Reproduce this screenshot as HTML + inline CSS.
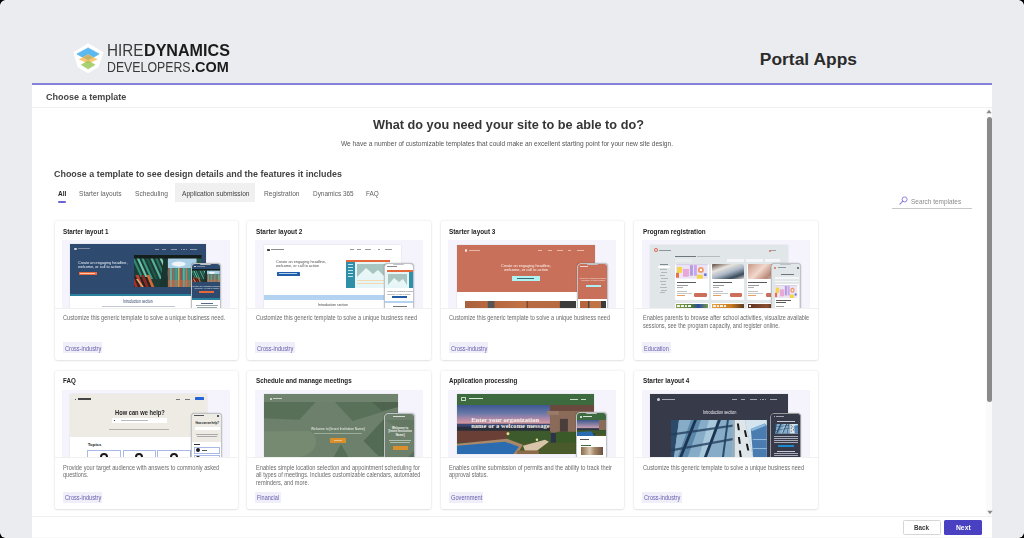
<!DOCTYPE html>
<html><head><meta charset="utf-8"><title>Choose a template</title>
<style>
html,body{margin:0;padding:0;width:1024px;height:538px;overflow:hidden;background:#000;}
#ring{position:absolute;left:0;top:0;width:1024px;height:538px;background:#fff;border-radius:6px;}
*{box-sizing:border-box;}
#root{position:absolute;left:0;top:0;width:1024px;height:538px;background:#ebecf0;border-radius:8px;overflow:hidden;font-family:"Liberation Sans",sans-serif;}
.a{position:absolute;white-space:nowrap;line-height:1;}
.b{position:absolute;}
.card{background:#fff;border-radius:2px;box-shadow:0 0 2.5px rgba(0,0,0,.13),0 1px 2px rgba(0,0,0,.07);}
</style></head><body><div id="ring"></div><div id="root">
<svg class="b" style="left:70px;top:40px" width="38" height="36" viewBox="0 0 38 36">
<polygon points="18.1,4.2 32.6,12.6 27.8,26.6 18.1,32.3 8.4,26.6 4.2,12.6" fill="#ffffff" stroke="#ffffff" stroke-width="1.6" stroke-linejoin="round"/>
<polygon points="18.1,7.9 29.1,14 18.1,20.2 6.9,14" fill="#5cb9ef" stroke="#5cb9ef" stroke-width="0.8" stroke-linejoin="round"/>
<polygon points="18.1,14.6 27.1,19.4 18.1,23.1 9.3,19.4" fill="#fdc873" stroke="#fdc873" stroke-width="0.6" stroke-linejoin="round"/>
<polygon points="18.1,14.6 23.4,17.4 18.1,20.2 12.8,17.4" fill="#c8b46c"/>
<polygon points="18.1,20.7 25.1,24.8 18.1,29.1 11.3,24.8" fill="#a9d173" stroke="#a9d173" stroke-width="0.6" stroke-linejoin="round"/>
<polygon points="18.1,20.9 21.5,22.4 18.1,23.1 14.7,22.4" fill="#b3c052"/>
</svg>
<div class="a" style="left:107.30px;top:42.63px;font-size:15.8px;font-weight:400;color:#3a3a3a;transform-origin:0 0;transform:scaleX(0.9648);">HIRE</div>
<div class="a" style="left:143.70px;top:42.63px;font-size:15.8px;font-weight:700;color:#1b1b1b;transform-origin:0 0;transform:scaleX(1.0193);">DYNAMICS</div>
<div class="a" style="left:107.20px;top:58.73px;font-size:15.2px;font-weight:400;color:#3a3a3a;transform-origin:0 0;transform:scaleX(0.8116);">DEVELOPERS</div>
<div class="a" style="left:191.40px;top:58.73px;font-size:15.2px;font-weight:700;color:#1b1b1b;transform-origin:0 0;transform:scaleX(0.9521);">.COM</div>
<div class="a" style="left:759.80px;top:50.97px;font-size:17.4px;font-weight:700;color:#2b2b2b;letter-spacing:0.024px;">Portal Apps</div>
<div class="b" style="left:32.00px;top:83.00px;width:960.00px;height:455.00px;background:#fff;"></div>
<div class="b" style="left:32.00px;top:83.00px;width:960.00px;height:2.00px;background:#8383d9;"></div>
<div class="a" style="left:46.00px;top:91.87px;font-size:9.6px;font-weight:700;color:#464646;transform-origin:0 0;transform:scaleX(0.9415);">Choose a template</div>
<div class="b" style="left:32.00px;top:107.00px;width:960.00px;height:1.00px;background:#f0f0f0;"></div>
<div class="b" style="left:985.50px;top:108.00px;width:6.50px;height:408.00px;background:#fafafa;"></div>
<svg class="b" style="left:986px;top:109px" width="6" height="5" viewBox="0 0 6 5"><polygon points="3,0.8 5.6,4.2 0.4,4.2" fill="#8a8a8a"/></svg>
<div class="b" style="left:987.20px;top:117.00px;width:4.60px;height:285.00px;background:#8a8a8a;border-radius:3px;"></div>
<svg class="b" style="left:986.5px;top:510px" width="6" height="5" viewBox="0 0 6 5"><polygon points="0.4,0.8 5.6,0.8 3,4.2" fill="#8a8a8a"/></svg>
<div class="a" style="left:373.20px;top:118.53px;font-size:12.6px;font-weight:700;color:#363636;transform-origin:0 0;transform:scaleX(1.0083);">What do you need your site to be able to do?</div>
<div class="a" style="left:341.20px;top:139.82px;font-size:7.3px;font-weight:400;color:#555;transform-origin:0 0;transform:scaleX(0.9039);">We have a number of customizable templates that could make an excellent starting point for your new site design.</div>
<div class="a" style="left:53.60px;top:168.77px;font-size:9.6px;font-weight:700;color:#424242;transform-origin:0 0;transform:scaleX(0.9311);">Choose a template to see design details and the features it includes</div>
<div class="b" style="left:175.30px;top:182.60px;width:79.60px;height:19.90px;background:#f0f0f0;"></div>
<div class="a" style="left:57.50px;top:189.82px;font-size:7.3px;font-weight:700;color:#242424;transform-origin:0 0;transform:scaleX(0.8920);">All</div>
<div class="a" style="left:78.90px;top:189.82px;font-size:7.3px;font-weight:400;color:#616161;transform-origin:0 0;transform:scaleX(0.9018);">Starter layouts</div>
<div class="a" style="left:134.50px;top:189.82px;font-size:7.3px;font-weight:400;color:#616161;transform-origin:0 0;transform:scaleX(0.9120);">Scheduling</div>
<div class="a" style="left:181.80px;top:189.82px;font-size:7.3px;font-weight:400;color:#424242;transform-origin:0 0;transform:scaleX(0.9097);">Application submission</div>
<div class="a" style="left:263.90px;top:189.82px;font-size:7.3px;font-weight:400;color:#616161;transform-origin:0 0;transform:scaleX(0.9126);">Registration</div>
<div class="a" style="left:312.90px;top:189.82px;font-size:7.3px;font-weight:400;color:#616161;transform-origin:0 0;transform:scaleX(0.8784);">Dynamics 365</div>
<div class="a" style="left:366.10px;top:189.82px;font-size:7.3px;font-weight:400;color:#616161;transform-origin:0 0;transform:scaleX(0.8770);">FAQ</div>
<div class="b" style="left:57.50px;top:201.40px;width:8.20px;height:1.60px;background:#6b62d6;border-radius:1px;"></div>
<svg class="b" style="left:899px;top:196px" width="9" height="9" viewBox="0 0 9 9"><circle cx="5.6" cy="3.4" r="2.5" fill="none" stroke="#8b7fe0" stroke-width="1"/><line x1="3.8" y1="5.2" x2="0.9" y2="8.1" stroke="#8b7fe0" stroke-width="1.1" stroke-linecap="round"/></svg>
<div class="a" style="left:911.00px;top:197.87px;font-size:7.0px;font-weight:400;color:#8a8a8a;transform-origin:0 0;transform:scaleX(0.9198);">Search templates</div>
<div class="b" style="left:891.80px;top:207.60px;width:80.40px;height:1.00px;background:#c8c8c8;"></div>
<div class="b" style="left:32.00px;top:516.00px;width:960.00px;height:1.20px;background:#f0f0f0;"></div>
<div class="b" style="left:903.20px;top:520.40px;width:37.60px;height:15.10px;background:#fff;border:1px solid #d6d6d6;border-radius:1.5px;"></div>
<div class="a" style="left:914.40px;top:524.14px;font-size:7.4px;font-weight:700;color:#3a3a3a;transform-origin:0 0;transform:scaleX(0.8548);">Back</div>
<div class="b" style="left:944.40px;top:520.40px;width:37.30px;height:15.10px;background:#4a41c2;border-radius:1.5px;"></div>
<div class="a" style="left:956.20px;top:524.14px;font-size:7.4px;font-weight:700;color:#ffffff;transform-origin:0 0;transform:scaleX(0.9133);">Next</div>
<div class="b" style="left:32.00px;top:537.00px;width:960.00px;height:1.00px;background:#f8f9f8;"></div>
<div class="b card" style="left:54.5px;top:221.4px;width:183.7px;height:138.5px"><div class="a" style="left:8.30px;top:6.44px;font-size:8.1px;font-weight:700;color:#242424;transform-origin:0 0;transform:scaleX(0.7720);">Starter layout 1</div><div class="b" style="left:7.6px;top:18.9px;width:168px;height:67.7px;background:#f5f4fd;overflow:hidden"><div class="b" style="left:7.9px;top:4px;width:136.2px;height:70px;overflow:hidden;box-shadow:0 0 1px rgba(0,0,0,.2)"><div class="b" style="left:0.00px;top:0.00px;width:136.20px;height:49.40px;background:#2e4a6f;"></div><div class="b" style="left:0.00px;top:49.40px;width:136.20px;height:2.30px;background:#2a819e;"></div><div class="b" style="left:0.00px;top:51.70px;width:136.20px;height:20.00px;background:#fff;"></div><div class="b" style="left:3.9px;top:3.4px;width:2.8px;height:2.8px;border-radius:50%;background:#cfd6e2"></div><div class="b" style="left:8.00px;top:4.00px;width:12.00px;height:1.10px;background:#7d8aa2;"></div><div class="b" style="left:85.50px;top:4.30px;width:4.00px;height:0.90px;background:#8d9ab0;"></div><div class="b" style="left:92.50px;top:4.30px;width:4.00px;height:0.90px;background:#8d9ab0;"></div><div class="b" style="left:101.00px;top:4.30px;width:6.00px;height:0.90px;background:#8d9ab0;"></div><div class="b" style="left:111.00px;top:4.30px;width:0.60px;height:0.90px;background:#8d9ab0;"></div><div class="b" style="left:113.00px;top:4.30px;width:2.00px;height:0.90px;background:#8d9ab0;"></div><div class="b" style="left:116.00px;top:4.30px;width:0.60px;height:0.90px;background:#8d9ab0;"></div><div class="b" style="left:120.50px;top:4.30px;width:7.00px;height:0.90px;background:#8d9ab0;"></div><div class="a" style="left:8.30px;top:16.86px;font-size:4.3px;font-weight:400;color:#f0f3f8;transform-origin:0 0;transform:scaleX(0.8778);">Create an engaging headline,</div><div class="a" style="left:8.30px;top:20.56px;font-size:4.3px;font-weight:400;color:#f0f3f8;transform-origin:0 0;transform:scaleX(0.8913);">welcome, or call to action</div><div class="b" style="left:8.70px;top:27.70px;width:18.80px;height:3.20px;background:#e8683a;"></div><div class="b" style="left:10.50px;top:29.00px;width:15.00px;height:0.60px;background:#f8c8b0;"></div><div class="b" style="left:64.5px;top:10.8px;width:67.5px;height:32.1px;overflow:hidden"><svg class="b" style="left:0;top:0;filter:blur(0.3px)" width="67.5" height="32.1" viewBox="0 0 68 32" preserveAspectRatio="none"><rect width="68" height="32" fill="#1e3c36"/><polygon points="-2.0,3 0.4,3 10.0,24 7.6,24" fill="#2f8a74"/><polygon points="2.6,3 5.0,3 14.6,24 12.2,24" fill="#6cc4a8"/><polygon points="7.2,3 9.6,3 19.2,24 16.8,24" fill="#3c9c84"/><polygon points="11.8,3 14.2,3 23.8,24 21.4,24" fill="#1e5a4c"/><polygon points="16.4,3 18.8,3 28.4,24 26.0,24" fill="#58b096"/><polygon points="21.0,3 23.4,3 33.0,24 30.6,24" fill="#2a7864"/><polygon points="25.6,3 28.0,3 37.6,24 35.2,24" fill="#7fd0b6"/><polygon points="30.2,3 32.6,3 42.2,24 39.8,24" fill="#357f6c"/><polygon points="0,22 14,22 20,32 0,32" fill="#2a2220"/><polygon points="-4.0,20 -1.0,20 4.0,32 1.0,32" fill="#a8302a"/><polygon points="1.5,20 4.5,20 9.5,32 6.5,32" fill="#c24032"/><polygon points="7.0,20 10.0,20 15.0,32 12.0,32" fill="#8a2a26"/><polygon points="12.5,20 15.5,20 20.5,32 17.5,32" fill="#d06a3a"/><polygon points="2,24 4,24 10,32 8,32" fill="#d8a870"/><rect x="34" y="3" width="30" height="10" fill="#a8cfe6"/><ellipse cx="45" cy="9" rx="7" ry="2.6" fill="#eef4f8"/><rect x="34" y="13" width="34" height="19" fill="#3a8a80"/><rect x="34.0" y="13" width="1.3" height="19" fill="#c84a3c"/><rect x="36.6" y="13" width="1.3" height="19" fill="#7cc0b0"/><rect x="39.2" y="13" width="1.3" height="19" fill="#d0503e"/><rect x="41.8" y="13" width="1.3" height="19" fill="#4aa090"/><rect x="44.4" y="13" width="1.3" height="19" fill="#e8a84a"/><rect x="47.0" y="13" width="1.3" height="19" fill="#c83a3a"/><rect x="49.6" y="13" width="1.3" height="19" fill="#6ab8a8"/><rect x="52.2" y="13" width="1.3" height="19" fill="#e06a40"/><rect x="54.8" y="13" width="1.3" height="19" fill="#3a8a80"/><rect x="57.4" y="13" width="1.3" height="19" fill="#d04a3a"/><rect x="60.0" y="13" width="1.3" height="19" fill="#8ac8b8"/><rect x="62.6" y="13" width="1.3" height="19" fill="#e8b050"/><rect x="65.2" y="13" width="1.3" height="19" fill="#c84040"/><rect x="34" y="25" width="34" height="7" fill="#d86a40" opacity=".45"/><rect x="63" y="3" width="5" height="12" fill="#2a5a50"/><polygon points="30,3 34,3 34,32 26,32" fill="#1a3430"/><rect width="68" height="3.5" fill="#141e1c"/></svg></div><div class="a" style="left:53.50px;top:56.19px;font-size:4.5px;font-weight:400;color:#34486e;transform-origin:0 0;transform:scaleX(0.7628);">Introduction section</div><div class="b" style="left:32.00px;top:62.00px;width:73.00px;height:0.60px;background:#c4c8d2;"></div></div><div class="b" style="left:128.60px;top:23.20px;width:30.5px;height:60px;border:1.5px solid #c0c0c0;border-radius:4px;background:#fff;overflow:hidden;box-shadow:0 0 1.2px rgba(0,0,0,.4)"><div class="b" style="left:0.00px;top:0.00px;width:30.00px;height:4.50px;background:#2e4a6f;"></div><div class="b" style="left:2.50px;top:1.50px;width:2.00px;height:1.20px;background:#c8d0dc;"></div><div class="b" style="left:5.50px;top:1.80px;width:8.00px;height:0.70px;background:#7d8aa2;"></div><div class="b" style="left:0;top:4.5px;width:30px;height:13.5px;overflow:hidden"><svg class="b" style="left:0;top:0;filter:blur(0.3px)" width="30" height="13.5" viewBox="0 0 68 32" preserveAspectRatio="none"><rect width="68" height="32" fill="#1e3c36"/><polygon points="-2.0,3 0.4,3 10.0,24 7.6,24" fill="#2f8a74"/><polygon points="2.6,3 5.0,3 14.6,24 12.2,24" fill="#6cc4a8"/><polygon points="7.2,3 9.6,3 19.2,24 16.8,24" fill="#3c9c84"/><polygon points="11.8,3 14.2,3 23.8,24 21.4,24" fill="#1e5a4c"/><polygon points="16.4,3 18.8,3 28.4,24 26.0,24" fill="#58b096"/><polygon points="21.0,3 23.4,3 33.0,24 30.6,24" fill="#2a7864"/><polygon points="25.6,3 28.0,3 37.6,24 35.2,24" fill="#7fd0b6"/><polygon points="30.2,3 32.6,3 42.2,24 39.8,24" fill="#357f6c"/><polygon points="0,22 14,22 20,32 0,32" fill="#2a2220"/><polygon points="-4.0,20 -1.0,20 4.0,32 1.0,32" fill="#a8302a"/><polygon points="1.5,20 4.5,20 9.5,32 6.5,32" fill="#c24032"/><polygon points="7.0,20 10.0,20 15.0,32 12.0,32" fill="#8a2a26"/><polygon points="12.5,20 15.5,20 20.5,32 17.5,32" fill="#d06a3a"/><polygon points="2,24 4,24 10,32 8,32" fill="#d8a870"/><rect x="34" y="3" width="30" height="10" fill="#a8cfe6"/><ellipse cx="45" cy="9" rx="7" ry="2.6" fill="#eef4f8"/><rect x="34" y="13" width="34" height="19" fill="#3a8a80"/><rect x="34.0" y="13" width="1.3" height="19" fill="#c84a3c"/><rect x="36.6" y="13" width="1.3" height="19" fill="#7cc0b0"/><rect x="39.2" y="13" width="1.3" height="19" fill="#d0503e"/><rect x="41.8" y="13" width="1.3" height="19" fill="#4aa090"/><rect x="44.4" y="13" width="1.3" height="19" fill="#e8a84a"/><rect x="47.0" y="13" width="1.3" height="19" fill="#c83a3a"/><rect x="49.6" y="13" width="1.3" height="19" fill="#6ab8a8"/><rect x="52.2" y="13" width="1.3" height="19" fill="#e06a40"/><rect x="54.8" y="13" width="1.3" height="19" fill="#3a8a80"/><rect x="57.4" y="13" width="1.3" height="19" fill="#d04a3a"/><rect x="60.0" y="13" width="1.3" height="19" fill="#8ac8b8"/><rect x="62.6" y="13" width="1.3" height="19" fill="#e8b050"/><rect x="65.2" y="13" width="1.3" height="19" fill="#c84040"/><rect x="34" y="25" width="34" height="7" fill="#d86a40" opacity=".45"/><rect x="63" y="3" width="5" height="12" fill="#2a5a50"/><polygon points="30,3 34,3 34,32 26,32" fill="#1a3430"/><rect width="68" height="3.5" fill="#141e1c"/></svg></div><div class="b" style="left:0.00px;top:18.00px;width:30.00px;height:16.00px;background:#2e4a6f;"></div><div class="a" style="left:15.00px;top:20.30px;font-size:2.2px;font-weight:400;color:#e8eef6;line-height:2.6px;text-align:center;transform:translateX(-50%);">Create an engaging headline,<br>welcome, or call to action</div><div class="b" style="left:7.50px;top:26.20px;width:15.00px;height:2.60px;background:#e5683c;"></div><div class="b" style="left:0.00px;top:34.00px;width:30.00px;height:2.00px;background:#2a819e;"></div><div class="b" style="left:0.00px;top:36.00px;width:30.00px;height:30.00px;background:#fff;"></div><div class="b" style="left:9.00px;top:38.50px;width:12.00px;height:0.80px;background:#5a6a8a;"></div><div class="b" style="left:4.00px;top:41.00px;width:22.00px;height:0.60px;background:#9aa;"></div><div class="b" style="left:5.00px;top:43.00px;width:20.00px;height:0.60px;background:#9aa;"></div></div><div class="b" style="left:138.10px;top:23.40px;width:11px;height:1.6px;background:#c0c0c0;border-radius:0 0 1px 1px"></div></div><div class="b" style="left:0.00px;top:86.60px;width:184.00px;height:0.90px;background:#f0f0f0;"></div><div class="a" style="left:8.30px;top:94.08px;font-size:6.4px;font-weight:400;color:#6a6a6a;transform-origin:0 0;transform:scaleX(0.8727);">Customize this generic template to solve a unique business need.</div><div class="b" style="left:8.1px;top:121.1px;height:10.9px;width:39.8px;background:#f0eef9;"></div><div class="a" style="left:10.10px;top:124.48px;font-size:6.4px;font-weight:400;color:#6660ae;transform-origin:0 0;transform:scaleX(0.8798);">Cross-industry</div></div><div class="b card" style="left:247.3px;top:221.4px;width:183.7px;height:138.5px"><div class="a" style="left:8.30px;top:6.44px;font-size:8.1px;font-weight:700;color:#242424;transform-origin:0 0;transform:scaleX(0.7874);">Starter layout 2</div><div class="b" style="left:7.6px;top:18.9px;width:168px;height:67.7px;background:#f5f4fd;overflow:hidden"><div class="b" style="left:9.2px;top:4.7px;width:137.1px;height:70px;overflow:hidden;box-shadow:0 0 1px rgba(0,0,0,.2)"><div class="b" style="left:0.00px;top:0.00px;width:137.10px;height:70.00px;background:#fff;"></div><div class="b" style="left:3.2px;top:3.6px;width:2.4px;height:2.6px;border:0.7px solid #444;border-radius:0.5px"></div><div class="b" style="left:7.00px;top:4.20px;width:13.00px;height:1.20px;background:#8a8a8a;"></div><div class="b" style="left:86.00px;top:4.40px;width:4.00px;height:1.00px;background:#9a9a9a;"></div><div class="b" style="left:93.00px;top:4.40px;width:4.00px;height:1.00px;background:#9a9a9a;"></div><div class="b" style="left:101.00px;top:4.40px;width:6.00px;height:1.00px;background:#9a9a9a;"></div><div class="b" style="left:114.00px;top:4.40px;width:2.00px;height:1.00px;background:#9a9a9a;"></div><div class="b" style="left:121.00px;top:4.40px;width:7.00px;height:1.00px;background:#9a9a9a;"></div><div class="a" style="left:12.40px;top:14.78px;font-size:4.4px;font-weight:400;color:#505050;transform-origin:0 0;transform:scaleX(0.8660);">Create an engaging headline,</div><div class="a" style="left:12.40px;top:19.18px;font-size:4.4px;font-weight:400;color:#505050;transform-origin:0 0;transform:scaleX(0.8745);">welcome, or call to action</div><div class="b" style="left:12.50px;top:26.80px;width:23.40px;height:3.80px;background:#1f5ea8;border-radius:0.5px;"></div><div class="b" style="left:15.00px;top:28.40px;width:18.00px;height:0.60px;background:#b8d0ec;"></div><div class="b" style="left:82.00px;top:14.60px;width:43.50px;height:28.20px;background:#e6f6f8;"></div><div class="b" style="left:82.00px;top:14.60px;width:43.50px;height:2.40px;background:#e4683c;"></div><div class="b" style="left:82.00px;top:17.00px;width:8.50px;height:25.80px;background:#2f8ea8;"></div><div class="b" style="left:83.50px;top:19.50px;width:5.50px;height:0.90px;background:#bfe6ee;"></div><div class="b" style="left:83.50px;top:22.30px;width:5.50px;height:0.90px;background:#bfe6ee;"></div><div class="b" style="left:83.50px;top:25.10px;width:5.50px;height:0.90px;background:#bfe6ee;"></div><div class="b" style="left:83.50px;top:27.90px;width:5.50px;height:0.90px;background:#bfe6ee;"></div><div class="b" style="left:83.50px;top:30.70px;width:5.50px;height:0.90px;background:#bfe6ee;"></div><div class="b" style="left:93.00px;top:19.50px;width:28.00px;height:13.00px;background:#a9c5c1;"></div><svg class="b" style="left:93px;top:19.5px" width="28" height="13" viewBox="0 0 28 13"><polygon points="0,13 9,4 16,10 21,6 28,13" fill="#e9f6f8"/></svg><div class="b" style="left:93.00px;top:35.00px;width:28.00px;height:0.80px;background:#f2d9b0;"></div><div class="b" style="left:93.00px;top:38.00px;width:28.00px;height:0.80px;background:#f2d9b0;"></div><div class="b" style="left:0.00px;top:49.80px;width:137.10px;height:5.00px;background:#b3d3f1;"></div><div class="a" style="left:54.00px;top:58.43px;font-size:4.1px;font-weight:400;color:#444;transform-origin:0 0;transform:scaleX(0.8412);">Introduction section</div></div><div class="b" style="left:128.80px;top:22.90px;width:30.5px;height:60px;border:1.5px solid #bfc2c6;border-radius:4px;background:#fff;overflow:hidden;box-shadow:0 0 1.2px rgba(0,0,0,.4)"><div class="b" style="left:2.00px;top:2.00px;width:10.00px;height:1.00px;background:#888;"></div><div class="b" style="left:2.00px;top:6.00px;width:26.00px;height:1.80px;background:#e4683c;"></div><div class="b" style="left:0.00px;top:7.80px;width:30.00px;height:16.00px;background:#e6f6f8;"></div><div class="b" style="left:24.00px;top:7.80px;width:6.00px;height:16.00px;background:#2f8ea8;"></div><div class="b" style="left:3.00px;top:9.50px;width:19.00px;height:11.00px;background:#a9c5c1;"></div><svg class="b" style="left:3px;top:9.5px" width="19" height="11" viewBox="0 0 19 11"><polygon points="0,11 6,4 11,8 15,5 19,11" fill="#e9f6f8"/></svg><div class="a" style="left:2.50px;top:26.00px;font-size:2.1px;font-weight:400;color:#444;line-height:2.6px;">Create an engaging headline,<br>welcome, or call to action</div><div class="b" style="left:7.00px;top:31.50px;width:15.00px;height:2.60px;background:#1f5aa3;"></div><div class="b" style="left:0.00px;top:37.00px;width:30.00px;height:2.20px;background:#b3d3f1;"></div><div class="b" style="left:8.00px;top:42.00px;width:14.00px;height:0.80px;background:#777;"></div></div><div class="b" style="left:138.30px;top:23.10px;width:11px;height:1.6px;background:#bfc2c6;border-radius:0 0 1px 1px"></div></div><div class="b" style="left:0.00px;top:86.60px;width:184.00px;height:0.90px;background:#f0f0f0;"></div><div class="a" style="left:8.30px;top:94.08px;font-size:6.4px;font-weight:400;color:#6a6a6a;transform-origin:0 0;transform:scaleX(0.8752);">Customize this generic template to solve a unique business need</div><div class="b" style="left:8.1px;top:121.1px;height:10.9px;width:39.8px;background:#f0eef9;"></div><div class="a" style="left:10.10px;top:124.48px;font-size:6.4px;font-weight:400;color:#6660ae;transform-origin:0 0;transform:scaleX(0.8798);">Cross-industry</div></div><div class="b card" style="left:440.5px;top:221.4px;width:183.7px;height:138.5px"><div class="a" style="left:8.30px;top:6.44px;font-size:8.1px;font-weight:700;color:#242424;transform-origin:0 0;transform:scaleX(0.7874);">Starter layout 3</div><div class="b" style="left:7.6px;top:18.9px;width:168px;height:67.7px;background:#f5f4fd;overflow:hidden"><div class="b" style="left:9px;top:4.7px;width:137.9px;height:70px;overflow:hidden;box-shadow:0 0 1px rgba(0,0,0,.2)"><div class="b" style="left:0.00px;top:0.00px;width:137.90px;height:47.50px;background:#c8705a;"></div><div class="b" style="left:0.00px;top:47.50px;width:137.90px;height:25.00px;background:#fff;"></div><div class="b" style="left:7.8px;top:4px;width:2.6px;height:2.6px;border-radius:50%;background:#f3e0da"></div><div class="b" style="left:11.50px;top:4.60px;width:11.00px;height:1.20px;background:#e9b8aa;"></div><div class="b" style="left:81.00px;top:4.60px;width:4.00px;height:1.00px;background:#e9b8aa;"></div><div class="b" style="left:91.00px;top:4.60px;width:4.00px;height:1.00px;background:#e9b8aa;"></div><div class="b" style="left:100.00px;top:4.60px;width:6.00px;height:1.00px;background:#e9b8aa;"></div><div class="b" style="left:111.00px;top:4.60px;width:3.00px;height:1.00px;background:#e9b8aa;"></div><div class="b" style="left:120.00px;top:4.60px;width:7.00px;height:1.00px;background:#e9b8aa;"></div><div class="a" style="left:43.80px;top:19.18px;font-size:4.4px;font-weight:400;color:#fdf2ee;transform-origin:0 0;transform:scaleX(0.8660);">Create an engaging headline,</div><div class="a" style="left:47.40px;top:23.48px;font-size:4.4px;font-weight:400;color:#fdf2ee;transform-origin:0 0;transform:scaleX(0.8928);">welcome, or call to action</div><div class="b" style="left:54.80px;top:31.10px;width:28.10px;height:4.70px;background:#aef2f4;"></div><div class="b" style="left:60.00px;top:33.20px;width:17.00px;height:0.70px;background:#3a6a6a;"></div><div class="b" style="left:23.50px;top:34.50px;width:10.00px;height:0.90px;background:#6ab8c0;opacity:0"></div><div class="b" style="left:8.00px;top:56.10px;width:111.00px;height:20.00px;background:linear-gradient(90deg,#a7603e 0%,#b8693f 20%,#555 21%,#555 26%,#b5663e 27%,#c27346 55%,#6a3a2a 56%,#b86a42 57%,#b86a42 85%,#3c3c3c 86%,#3c3c3c 100%);"></div></div><div class="b" style="left:129.10px;top:22.60px;width:30.5px;height:60px;border:1.5px solid #bfc2c6;border-radius:4px;background:#fff;overflow:hidden;box-shadow:0 0 1.2px rgba(0,0,0,.4)"><div class="b" style="left:0.00px;top:0.00px;width:30.00px;height:35.00px;background:#c8705a;"></div><div class="b" style="left:2.00px;top:2.00px;width:8.00px;height:1.00px;background:#f0d0c8;"></div><div class="a" style="left:15.00px;top:13.00px;font-size:2.1px;font-weight:400;color:#fbeee9;line-height:2.5px;text-align:center;transform:translateX(-50%);">Create an engaging headline,<br>welcome, or call to action</div><div class="b" style="left:7.50px;top:21.00px;width:15.00px;height:2.40px;background:#aef0f2;"></div><div class="b" style="left:2.00px;top:37.00px;width:26.00px;height:20.00px;background:linear-gradient(90deg,#b5663e 0%,#b5663e 30%,#444 31%,#444 36%,#c27346 37%,#c27346 80%,#3a3a3a 81%);"></div></div><div class="b" style="left:138.60px;top:22.80px;width:11px;height:1.6px;background:#bfc2c6;border-radius:0 0 1px 1px"></div></div><div class="b" style="left:0.00px;top:86.60px;width:184.00px;height:0.90px;background:#f0f0f0;"></div><div class="a" style="left:8.30px;top:94.08px;font-size:6.4px;font-weight:400;color:#6a6a6a;transform-origin:0 0;transform:scaleX(0.8752);">Customize this generic template to solve a unique business need</div><div class="b" style="left:8.1px;top:121.1px;height:10.9px;width:39.8px;background:#f0eef9;"></div><div class="a" style="left:10.10px;top:124.48px;font-size:6.4px;font-weight:400;color:#6660ae;transform-origin:0 0;transform:scaleX(0.8798);">Cross-industry</div></div><div class="b card" style="left:634.3px;top:221.4px;width:183.7px;height:138.5px"><div class="a" style="left:8.30px;top:6.44px;font-size:8.1px;font-weight:700;color:#242424;transform-origin:0 0;transform:scaleX(0.7832);">Program registration</div><div class="b" style="left:7.6px;top:18.9px;width:168px;height:67.7px;background:#f5f4fd;overflow:hidden"><div class="b" style="left:8.6px;top:4.5px;width:137.9px;height:70px;overflow:hidden;box-shadow:0 0 1px rgba(0,0,0,.2)"><div class="b" style="left:0.00px;top:0.00px;width:137.90px;height:70.00px;background:#e1e6e8;"></div><div class="b" style="left:3.2px;top:3.2px;width:4.4px;height:4.4px;border-radius:50%;background:#d27060"></div><div class="b" style="left:4.3px;top:4.3px;width:2.2px;height:2.2px;border-radius:50%;background:#f4d8d0"></div><div class="b" style="left:9.00px;top:5.00px;width:12.00px;height:0.80px;background:#8d969a;"></div><div class="b" style="left:118.5px;top:5px;width:1.8px;height:1.8px;border-radius:50%;background:#d27060"></div><div class="b" style="left:121.00px;top:5.50px;width:5.00px;height:0.70px;background:#9aa2a6;"></div><div class="b" style="left:24.50px;top:11.00px;width:21.00px;height:1.20px;background:#6e787c;"></div><div class="b" style="left:47.00px;top:11.30px;width:23.00px;height:0.60px;background:#b4bcc0;"></div><div class="b" style="left:24.50px;top:14.60px;width:17.00px;height:2.40px;background:#eaedee;border-radius:0.8px;"></div><div class="b" style="left:77.00px;top:14.50px;width:17.00px;height:2.40px;background:#f4f6f7;"></div><div class="b" style="left:96.00px;top:14.50px;width:17.00px;height:2.40px;background:#f4f6f7;"></div><div class="b" style="left:115.00px;top:14.50px;width:15.00px;height:2.40px;background:#f4f6f7;"></div><div class="b" style="left:9.50px;top:19.30px;width:8.00px;height:0.80px;background:#7d8a90;"></div><div class="b" style="left:7.30px;top:21.30px;width:11.80px;height:1.60px;background:#fff;border-radius:0.8px;"></div><div class="b" style="left:9.50px;top:24.50px;width:7.00px;height:0.60px;background:#b0b8bc;"></div><div class="b" style="left:10.50px;top:27.40px;width:6.00px;height:0.60px;background:#b0b8bc;"></div><div class="b" style="left:9.50px;top:30.30px;width:5.00px;height:0.60px;background:#b0b8bc;"></div><div class="b" style="left:10.50px;top:33.20px;width:7.00px;height:0.60px;background:#b0b8bc;"></div><div class="b" style="left:9.50px;top:36.10px;width:6.00px;height:0.60px;background:#b0b8bc;"></div><div class="b" style="left:10.50px;top:39.00px;width:5.00px;height:0.60px;background:#b0b8bc;"></div><div class="b" style="left:9.50px;top:41.90px;width:7.00px;height:0.60px;background:#b0b8bc;"></div><div class="b" style="left:10.50px;top:44.80px;width:6.00px;height:0.60px;background:#b0b8bc;"></div><div class="b" style="left:9.50px;top:47.70px;width:5.00px;height:0.60px;background:#b0b8bc;"></div><div class="b" style="left:24.9px;top:18.8px;width:33.4px;height:36.3px;background:#fff;border-radius:1.5px;overflow:hidden"><div class="b" style="left:0.8px;top:0.8px;width:31.8px;height:14.7px;overflow:hidden;border-radius:1px"><svg class="b" style="left:0;top:0;filter:blur(0.3px)" width="31.8" height="14.7" viewBox="0 0 32 15" preserveAspectRatio="none"><rect width="32" height="15" fill="#ece6f4"/><rect x="1" y="3" width="5" height="6" fill="#f4d44a"/><rect x="7" y="5" width="6" height="8" fill="#e8a8d8"/><rect x="14" y="1" width="3" height="11" fill="#b89ae0"/><rect x="18" y="1" width="3" height="11" fill="#c8a8ec"/><circle cx="25" cy="6" r="3" fill="#f0986a"/><circle cx="25" cy="6" r="1.2" fill="#fff"/><rect x="21" y="11" width="6" height="4" fill="#f4d44a"/><rect x="0" y="9" width="3" height="5" fill="#e8704a"/><circle cx="29.5" cy="11" r="1.5" fill="#6a7ad8"/><rect width="32" height="1.2" fill="#d8d0e8"/></svg></div><div class="b" style="left:1.60px;top:18.50px;width:19.00px;height:1.00px;background:#5a5a5a;"></div><div class="b" style="left:1.60px;top:21.50px;width:11.00px;height:0.60px;background:#9a9a9a;"></div><div class="b" style="left:1.60px;top:23.50px;width:6.00px;height:0.60px;background:#b0b0b0;"></div><div class="b" style="left:1.60px;top:27.00px;width:10.00px;height:0.60px;background:#c0c0c0;"></div><div class="b" style="left:1.60px;top:29.00px;width:15.00px;height:0.60px;background:#c8c8c8;"></div><div class="b" style="left:1.60px;top:31.00px;width:8.00px;height:0.70px;background:#e8a060;"></div><div class="b" style="left:19.00px;top:29.50px;width:12.50px;height:3.60px;background:#cc6e5a;border-radius:1.2px;"></div></div><div class="b" style="left:60.5px;top:18.8px;width:33.4px;height:36.3px;background:#fff;border-radius:1.5px;overflow:hidden"><div class="b" style="left:0.8px;top:0.8px;width:31.8px;height:14.7px;overflow:hidden;border-radius:1px"><div class="b" style="left:0.00px;top:0.00px;width:31.80px;height:14.70px;background:linear-gradient(160deg,#5a4438 0%,#e8e4de 30%,#a8b4c4 55%,#3a4a5a 80%,#e0d8d0 100%);"></div></div><div class="b" style="left:1.60px;top:18.50px;width:19.00px;height:1.00px;background:#5a5a5a;"></div><div class="b" style="left:1.60px;top:21.50px;width:11.00px;height:0.60px;background:#9a9a9a;"></div><div class="b" style="left:1.60px;top:23.50px;width:6.00px;height:0.60px;background:#b0b0b0;"></div><div class="b" style="left:1.60px;top:27.00px;width:10.00px;height:0.60px;background:#c0c0c0;"></div><div class="b" style="left:1.60px;top:29.00px;width:15.00px;height:0.60px;background:#c8c8c8;"></div><div class="b" style="left:1.60px;top:31.00px;width:8.00px;height:0.70px;background:#e8a060;"></div><div class="b" style="left:19.00px;top:29.50px;width:12.50px;height:3.60px;background:#cc6e5a;border-radius:1.2px;"></div></div><div class="b" style="left:96.3px;top:18.8px;width:33.4px;height:36.3px;background:#fff;border-radius:1.5px;overflow:hidden"><div class="b" style="left:0.8px;top:0.8px;width:31.8px;height:14.7px;overflow:hidden;border-radius:1px"><div class="b" style="left:0.00px;top:0.00px;width:31.80px;height:14.70px;background:linear-gradient(135deg,#c89888 0%,#f2d8cc 40%,#b88878 70%,#f4e4da 100%);"></div></div><div class="b" style="left:1.60px;top:18.50px;width:19.00px;height:1.00px;background:#5a5a5a;"></div><div class="b" style="left:1.60px;top:21.50px;width:11.00px;height:0.60px;background:#9a9a9a;"></div><div class="b" style="left:1.60px;top:23.50px;width:6.00px;height:0.60px;background:#b0b0b0;"></div><div class="b" style="left:1.60px;top:27.00px;width:10.00px;height:0.60px;background:#c0c0c0;"></div><div class="b" style="left:1.60px;top:29.00px;width:15.00px;height:0.60px;background:#c8c8c8;"></div><div class="b" style="left:1.60px;top:31.00px;width:8.00px;height:0.70px;background:#e8a060;"></div><div class="b" style="left:19.00px;top:29.50px;width:12.50px;height:3.60px;background:#cc6e5a;border-radius:1.2px;"></div></div><div class="b" style="left:24.9px;top:58.1px;width:33.4px;height:14px;background:#fff;border-radius:1.5px;overflow:hidden"><div class="b" style="left:0.80px;top:0.80px;width:31.80px;height:12.00px;background:linear-gradient(90deg,#8aa04a,#4a7a3a 50%,#2a4aa0 70%,#7a9a4a);"></div><div class="b" style="left:2.00px;top:2.00px;width:2.60px;height:1.80px;background:#f4f4f0;border-radius:0.5px;"></div><div class="b" style="left:5.60px;top:2.00px;width:2.60px;height:1.80px;background:#f4f4f0;border-radius:0.5px;"></div><div class="b" style="left:9.20px;top:2.00px;width:2.60px;height:1.80px;background:#f4f4f0;border-radius:0.5px;"></div><div class="b" style="left:12.80px;top:2.00px;width:2.60px;height:1.80px;background:#f4f4f0;border-radius:0.5px;"></div></div><div class="b" style="left:60.5px;top:58.1px;width:33.4px;height:14px;background:#fff;border-radius:1.5px;overflow:hidden"><div class="b" style="left:0.80px;top:0.80px;width:31.80px;height:12.00px;background:linear-gradient(90deg,#e8a040,#c87a20 60%,#5a3a20);"></div><div class="b" style="left:2.00px;top:2.00px;width:2.60px;height:1.80px;background:#f4f4f0;border-radius:0.5px;"></div><div class="b" style="left:5.60px;top:2.00px;width:2.60px;height:1.80px;background:#f4f4f0;border-radius:0.5px;"></div><div class="b" style="left:9.20px;top:2.00px;width:2.60px;height:1.80px;background:#f4f4f0;border-radius:0.5px;"></div><div class="b" style="left:12.80px;top:2.00px;width:2.60px;height:1.80px;background:#f4f4f0;border-radius:0.5px;"></div></div><div class="b" style="left:96.3px;top:58.1px;width:33.4px;height:14px;background:#fff;border-radius:1.5px;overflow:hidden"><div class="b" style="left:0.80px;top:0.80px;width:31.80px;height:12.00px;background:linear-gradient(90deg,#5a3020,#8a5030 60%,#3a2018);"></div><div class="b" style="left:2.00px;top:2.00px;width:2.60px;height:1.80px;background:#f4f4f0;border-radius:0.5px;"></div></div></div><div class="b" style="left:128.70px;top:22.90px;width:30.5px;height:60px;border:1.5px solid #bfc2c6;border-radius:4px;background:#fff;overflow:hidden;box-shadow:0 0 1.2px rgba(0,0,0,.4)"><div class="b" style="left:0.00px;top:0.00px;width:30.00px;height:60.00px;background:#e1e6e8;"></div><div class="b" style="left:2.5px;top:2.5px;width:2.4px;height:2.4px;border-radius:50%;background:#d27060"></div><div class="b" style="left:6.00px;top:3.20px;width:8.00px;height:0.70px;background:#8d969a;"></div><div class="b" style="left:25.00px;top:2.80px;width:2.20px;height:2.20px;border:0.4px solid #777;"></div><div class="b" style="left:9.00px;top:9.50px;width:13.00px;height:0.90px;background:#6e787c;"></div><div class="b" style="left:3.00px;top:13.00px;width:24.00px;height:1.80px;background:#f4f6f7;"></div><div class="b" style="left:3.00px;top:16.50px;width:24.00px;height:1.80px;background:#f4f6f7;"></div><div class="b" style="left:3px;top:20px;width:24px;height:40px;background:#fff;border-radius:1px;overflow:hidden"><div class="b" style="left:0.8px;top:0.8px;width:22.4px;height:13px;overflow:hidden"><svg class="b" style="left:0;top:0;filter:blur(0.3px)" width="22.4" height="13" viewBox="0 0 32 15" preserveAspectRatio="none"><rect width="32" height="15" fill="#ece6f4"/><rect x="1" y="3" width="5" height="6" fill="#f4d44a"/><rect x="7" y="5" width="6" height="8" fill="#e8a8d8"/><rect x="14" y="1" width="3" height="11" fill="#b89ae0"/><rect x="18" y="1" width="3" height="11" fill="#c8a8ec"/><circle cx="25" cy="6" r="3" fill="#f0986a"/><circle cx="25" cy="6" r="1.2" fill="#fff"/><rect x="21" y="11" width="6" height="4" fill="#f4d44a"/><rect x="0" y="9" width="3" height="5" fill="#e8704a"/><circle cx="29.5" cy="11" r="1.5" fill="#6a7ad8"/><rect width="32" height="1.2" fill="#d8d0e8"/></svg></div><div class="b" style="left:1.00px;top:16.00px;width:15.00px;height:0.90px;background:#5a5a5a;"></div><div class="b" style="left:1.00px;top:18.00px;width:10.00px;height:0.90px;background:#5a5a5a;"></div><div class="b" style="left:1.00px;top:21.50px;width:8.00px;height:0.60px;background:#a0a0a0;"></div><div class="b" style="left:1.00px;top:26.50px;width:8.00px;height:0.70px;background:#e8a060;"></div><div class="b" style="left:13.00px;top:26.00px;width:9.50px;height:3.00px;background:#cc6e5a;border-radius:1px;"></div></div></div><div class="b" style="left:138.20px;top:23.10px;width:11px;height:1.6px;background:#bfc2c6;border-radius:0 0 1px 1px"></div></div><div class="b" style="left:0.00px;top:86.60px;width:184.00px;height:0.90px;background:#f0f0f0;"></div><div class="a" style="left:8.30px;top:94.08px;font-size:6.4px;font-weight:400;color:#6a6a6a;transform-origin:0 0;transform:scaleX(0.8661);">Enables parents to browse after school activities, visualize available</div><div class="a" style="left:8.30px;top:101.53px;font-size:6.4px;font-weight:400;color:#6a6a6a;transform-origin:0 0;transform:scaleX(0.8683);">sessions, see the program capacity, and register online.</div><div class="b" style="left:8.1px;top:121.1px;height:10.9px;width:28.3px;background:#f0eef9;"></div><div class="a" style="left:10.10px;top:124.48px;font-size:6.4px;font-weight:400;color:#6660ae;transform-origin:0 0;transform:scaleX(0.8702);">Education</div></div><div class="b card" style="left:54.5px;top:370.9px;width:183.7px;height:138.5px"><div class="a" style="left:8.30px;top:6.44px;font-size:8.1px;font-weight:700;color:#242424;transform-origin:0 0;transform:scaleX(0.7691);">FAQ</div><div class="b" style="left:7.6px;top:18.9px;width:168px;height:67.7px;background:#f5f4fd;overflow:hidden"><div class="b" style="left:7.9px;top:4.5px;width:137px;height:70px;overflow:hidden;box-shadow:0 0 1px rgba(0,0,0,.2)"><div class="b" style="left:0.00px;top:0.00px;width:137.00px;height:42.30px;background:#eeebe5;"></div><div class="b" style="left:0.00px;top:42.30px;width:137.00px;height:30.00px;background:#fff;"></div><div class="b" style="left:5.00px;top:4.30px;width:1.50px;height:1.20px;background:#555;"></div><div class="b" style="left:8.00px;top:4.20px;width:13.00px;height:1.30px;background:#444;"></div><div class="b" style="left:106.00px;top:4.50px;width:4.50px;height:1.00px;background:#777;"></div><div class="b" style="left:115.50px;top:4.50px;width:5.00px;height:1.00px;background:#777;"></div><div class="b" style="left:124.80px;top:2.50px;width:9.20px;height:3.30px;background:#2563d8;border-radius:0.6px;"></div><div class="a" style="left:44.80px;top:14.22px;font-size:7.3px;font-weight:700;color:#262626;transform-origin:0 0;transform:scaleX(0.7867);">How can we help?</div><div class="b" style="left:41.80px;top:23.60px;width:55.20px;height:5.50px;background:#fff;"></div><div class="b" style="left:44.00px;top:25.90px;width:1.50px;height:1.00px;background:#444;"></div><div class="b" style="left:51.00px;top:25.90px;width:27.00px;height:0.70px;background:#bbb;"></div><div class="b" style="left:39.30px;top:34.60px;width:59.70px;height:0.70px;background:#b4b2ae;"></div><div class="a" style="left:17.70px;top:48.88px;font-size:4.4px;font-weight:700;color:#262626;">Topics</div><div class="b" style="left:17.20px;top:56.10px;width:33.80px;height:20.00px;background:#fff;border:0.8px solid #a9b9e8;"></div><div class="b" style="left:29.7px;top:59px;width:8px;height:8px;border-radius:50%;background:#1a1a1a"></div><div class="b" style="left:31.7px;top:61px;width:4px;height:4px;border-radius:50%;background:#fff"></div><div class="b" style="left:52.60px;top:56.10px;width:33.80px;height:20.00px;background:#fff;border:0.8px solid #a9b9e8;"></div><div class="b" style="left:65.1px;top:59px;width:8px;height:8px;border-radius:50%;background:#1a1a1a"></div><div class="b" style="left:67.1px;top:61px;width:4px;height:4px;border-radius:50%;background:#fff"></div><div class="b" style="left:87.50px;top:56.10px;width:33.80px;height:20.00px;background:#fff;border:0.8px solid #a9b9e8;"></div><div class="b" style="left:100.0px;top:59px;width:8px;height:8px;border-radius:50%;background:#1a1a1a"></div><div class="b" style="left:102.0px;top:61px;width:4px;height:4px;border-radius:50%;background:#fff"></div></div><div class="b" style="left:129.10px;top:22.80px;width:30.5px;height:60px;border:1.5px solid #bfc2c6;border-radius:4px;background:#fff;overflow:hidden;box-shadow:0 0 1.2px rgba(0,0,0,.4)"><div class="b" style="left:0.00px;top:0.00px;width:30.00px;height:28.00px;background:#eeebe5;"></div><div class="b" style="left:2.00px;top:1.50px;width:10.00px;height:1.00px;background:#555;"></div><div class="b" style="left:25.00px;top:1.80px;width:2.00px;height:2.00px;background:#555;"></div><div class="a" style="left:3.20px;top:8.15px;font-size:2.9px;font-weight:700;color:#262626;letter-spacing:-0.102px;">How can we help?</div><div class="b" style="left:2.50px;top:13.00px;width:25.00px;height:3.20px;background:#fff;"></div><div class="b" style="left:4.00px;top:20.00px;width:22.00px;height:0.60px;background:#aaa;"></div><div class="b" style="left:5.00px;top:22.00px;width:20.00px;height:0.60px;background:#aaa;"></div><div class="b" style="left:0.00px;top:28.00px;width:30.00px;height:40.00px;background:#fff;"></div><div class="b" style="left:2.00px;top:30.50px;width:6.00px;height:1.00px;background:#333;"></div><div class="b" style="left:2.00px;top:33.50px;width:26.00px;height:6.50px;background:#fff;border:0.6px solid #a9b9e8;"></div><div class="b" style="left:3.8px;top:34.6px;width:4px;height:4px;border-radius:50%;background:#1a1a1a"></div><div class="b" style="left:10.00px;top:36.30px;width:5.00px;height:0.80px;background:#555;"></div><div class="b" style="left:2.00px;top:41.50px;width:26.00px;height:6.50px;background:#fff;border:0.6px solid #a9b9e8;"></div><div class="b" style="left:3.8px;top:42.6px;width:4px;height:4px;border-radius:50%;background:#1a1a1a"></div><div class="b" style="left:10.00px;top:44.30px;width:5.00px;height:0.80px;background:#555;"></div></div><div class="b" style="left:138.60px;top:23.00px;width:11px;height:1.6px;background:#bfc2c6;border-radius:0 0 1px 1px"></div></div><div class="b" style="left:0.00px;top:86.60px;width:184.00px;height:0.90px;background:#f0f0f0;"></div><div class="a" style="left:8.30px;top:94.08px;font-size:6.4px;font-weight:400;color:#6a6a6a;transform-origin:0 0;transform:scaleX(0.8815);">Provide your target audience with answers to commonly asked</div><div class="a" style="left:8.30px;top:101.53px;font-size:6.4px;font-weight:400;color:#6a6a6a;transform-origin:0 0;transform:scaleX(0.8663);">questions.</div><div class="b" style="left:8.1px;top:121.1px;height:10.9px;width:39.8px;background:#f0eef9;"></div><div class="a" style="left:10.10px;top:124.48px;font-size:6.4px;font-weight:400;color:#6660ae;transform-origin:0 0;transform:scaleX(0.8798);">Cross-industry</div></div><div class="b card" style="left:247.3px;top:370.9px;width:183.7px;height:138.5px"><div class="a" style="left:8.30px;top:6.44px;font-size:8.1px;font-weight:700;color:#242424;transform-origin:0 0;transform:scaleX(0.7765);">Schedule and manage meetings</div><div class="b" style="left:7.6px;top:18.9px;width:168px;height:67.7px;background:#f5f4fd;overflow:hidden"><div class="b" style="left:8.7px;top:4.5px;width:134.3px;height:70px;overflow:hidden;box-shadow:0 0 1px rgba(0,0,0,.2)"><div class="b" style="left:0.00px;top:0.00px;width:134.30px;height:70.00px;background:#6c806b;"></div><div class="b" style="left:0.00px;top:0.00px;width:134.30px;height:7.90px;background:#6f836e;"></div><svg class="b" style="left:0;top:0;filter:blur(0.3px)" width="134.3" height="70" viewBox="0 0 134.3 70"><polygon points="0,7.9 51.7,7.9 35.3,25.7 0,24.3" fill="#587058"/><polygon points="70.9,7.9 134.3,7.9 134.3,13 88.6,27.1" fill="#597159"/><polygon points="108,7.9 134.3,7.9 134.3,13 118,17" fill="#4e644e"/><path d="M0,37.3 L45,37 Q53,40 52,50 Q50,58 40,62 L0,70 Z" fill="#768a71"/><polygon points="120,25 99.6,46.9 114.6,62 134.3,62 134.3,22" fill="#536a54"/><polygon points="65.4,70 77,50.3 88.6,70" fill="#566e57"/></svg><div class="b" style="left:6px;top:3.3px;width:2px;height:2px;border-radius:50%;background:#e8ece6"></div><div class="b" style="left:9.00px;top:3.80px;width:9.00px;height:1.00px;background:#c8d0c6;"></div><div class="a" style="left:47.60px;top:32.31px;font-size:4.0px;font-weight:400;color:#eef2ec;transform-origin:0 0;transform:scaleX(0.8333);">Welcome to [Insert Institution Name]</div><div class="b" style="left:50.30px;top:38.40px;width:47.90px;height:0.60px;background:#9aac98;"></div><div class="b" style="left:66.80px;top:43.90px;width:15.30px;height:4.40px;background:#d9902a;border-radius:0.5px;"></div><div class="b" style="left:70.50px;top:45.90px;width:8.00px;height:0.50px;background:#ecc088;"></div></div><div class="b" style="left:129.30px;top:22.80px;width:30.5px;height:60px;border:1.5px solid #bfc2c6;border-radius:4px;background:#fff;overflow:hidden;box-shadow:0 0 1.2px rgba(0,0,0,.4)"><div class="b" style="left:0.00px;top:0.00px;width:30.00px;height:60.00px;background:#6c806b;"></div><svg class="b" style="left:0;top:6px" width="30" height="54" viewBox="0 0 30 54"><polygon points="0,0 30,0 30,12 20,12" fill="#5d725d" opacity=".6"/><polygon points="20,40 30,30 30,54 14,54" fill="#55695a" opacity=".8"/></svg><div class="b" style="left:8.00px;top:2.50px;width:12.00px;height:1.00px;background:#d8dcd6;"></div><div class="a" style="left:15.00px;top:13.50px;font-size:2.9px;font-weight:700;color:#f2f2ee;line-height:3.3px;text-align:center;transform:translateX(-50%);">Welcome to<br>[Insert Institution<br>Name]</div><div class="b" style="left:4.00px;top:26.00px;width:22.00px;height:0.60px;background:#aebcac;"></div><div class="b" style="left:5.00px;top:28.00px;width:20.00px;height:0.60px;background:#aebcac;"></div><div class="b" style="left:7.50px;top:32.50px;width:15.00px;height:4.00px;background:#d98f2b;"></div></div><div class="b" style="left:138.80px;top:23.00px;width:11px;height:1.6px;background:#bfc2c6;border-radius:0 0 1px 1px"></div></div><div class="b" style="left:0.00px;top:86.60px;width:184.00px;height:0.90px;background:#f0f0f0;"></div><div class="a" style="left:8.30px;top:94.08px;font-size:6.4px;font-weight:400;color:#6a6a6a;transform-origin:0 0;transform:scaleX(0.8852);">Enables simple location selection and appointment scheduling for</div><div class="a" style="left:8.30px;top:101.53px;font-size:6.4px;font-weight:400;color:#6a6a6a;transform-origin:0 0;transform:scaleX(0.8746);">all types of meetings. Includes customizable calendars, automated</div><div class="a" style="left:8.30px;top:108.98px;font-size:6.4px;font-weight:400;color:#6a6a6a;transform-origin:0 0;transform:scaleX(0.8749);">reminders, and more.</div><div class="b" style="left:8.1px;top:121.1px;height:10.9px;width:25.6px;background:#f0eef9;"></div><div class="a" style="left:10.10px;top:124.48px;font-size:6.4px;font-weight:400;color:#6660ae;transform-origin:0 0;transform:scaleX(0.8617);">Financial</div></div><div class="b card" style="left:440.5px;top:370.9px;width:183.7px;height:138.5px"><div class="a" style="left:8.30px;top:6.44px;font-size:8.1px;font-weight:700;color:#242424;transform-origin:0 0;transform:scaleX(0.7642);">Application processing</div><div class="b" style="left:7.6px;top:18.9px;width:168px;height:67.7px;background:#f5f4fd;overflow:hidden"><div class="b" style="left:8.5px;top:4.3px;width:137.9px;height:60.2px;overflow:hidden;box-shadow:0 0 1px rgba(0,0,0,.2)"><div class="b" style="left:0.00px;top:0.00px;width:137.90px;height:10.60px;background:#3d6b3f;"></div><div class="b" style="left:4.80px;top:2.80px;width:4.40px;height:4.40px;border:0.6px solid #c8dcc8;border-radius:0.6px;"></div><div class="b" style="left:12.50px;top:4.30px;width:14.00px;height:1.10px;background:#d8e6d8;"></div><div class="b" style="left:113.00px;top:5.00px;width:8.00px;height:0.90px;background:#c8dcc8;"></div><div class="b" style="left:124.50px;top:5.00px;width:5.00px;height:0.90px;background:#c8dcc8;"></div><svg class="b" style="left:0;top:10.6px;filter:blur(0.35px)" width="137.9" height="49.6" viewBox="0 0 138 50" preserveAspectRatio="none"><defs><linearGradient id="sky7" x1="0" y1="0" x2="0" y2="1"><stop offset="0" stop-color="#3c5890"/><stop offset=".45" stop-color="#6a78a8"/><stop offset=".75" stop-color="#b08aa8"/><stop offset="1" stop-color="#d89aa0"/></linearGradient></defs><rect width="138" height="50" fill="#2c3448"/><rect width="138" height="19" fill="url(#sky7)"/><rect y="19" width="138" height="3" fill="#3a4670"/><rect y="22" width="138" height="6" fill="#2a2e3a"/><rect x="93" y="0" width="45" height="28" fill="#8a6a58"/><rect x="93" y="0" width="45" height="6" fill="#6a4a3e"/><rect x="90" y="6" width="12" height="4" fill="#9a7a68"/><rect x="103" y="14" width="8" height="13" fill="#4a3e3a"/><rect x="0" y="26" width="52" height="12" fill="#6a4036"/><rect x="50" y="26" width="44" height="13" rx="2" fill="#3c5a2c"/><rect x="99" y="27" width="25" height="13" rx="2" fill="#3a5a28"/><rect x="0" y="38" width="138" height="12" fill="#4a5a2a"/><polygon points="0,39 50,34 66,40 60,50 0,50" fill="#a88868"/><polygon points="0,41 48,37 62,42 56,50 0,50" fill="#2b6cb0"/><polygon points="66,41 88,35 92,37 80,46 68,46" fill="#d8c4a8"/><rect x="60" y="46" width="22" height="4" fill="#8a6a48"/><circle cx="51" cy="29" r="1.5" fill="#f0d890"/><circle cx="80" cy="35" r="1.2" fill="#e8e0a0"/></svg><div class="a" style="left:14.60px;top:22.68px;font-size:6.4px;font-weight:700;color:#f6f2ec;font-family:'Liberation Serif',serif;letter-spacing:0.091px;">Enter your organization</div><div class="a" style="left:14.60px;top:28.98px;font-size:6.4px;font-weight:700;color:#f6f2ec;font-family:'Liberation Serif',serif;letter-spacing:0.092px;">name or a welcome message</div></div><div class="b" style="left:128.40px;top:22.30px;width:30.5px;height:60px;border:1.5px solid #bfc2c6;border-radius:4px;background:#fff;overflow:hidden;box-shadow:0 0 1.2px rgba(0,0,0,.4)"><div class="b" style="left:0.00px;top:0.00px;width:30.00px;height:6.80px;background:#3d6b3f;"></div><div class="b" style="left:2.50px;top:2.50px;width:2.00px;height:2.00px;border:0.4px solid #c8dcc8;"></div><div class="b" style="left:6.00px;top:3.00px;width:9.00px;height:0.90px;background:#d8e6d8;"></div><svg class="b" style="left:0;top:6.8px" width="30" height="16.3" viewBox="0 0 30 16" preserveAspectRatio="none"><defs><linearGradient id="sky7p" x1="0" y1="0" x2="0" y2="1"><stop offset="0" stop-color="#3c5890"/><stop offset="1" stop-color="#c8a0b0"/></linearGradient></defs><rect width="30" height="16" fill="#2c3448"/><rect width="30" height="8" fill="url(#sky7p)"/><rect x="22" y="0" width="8" height="10" fill="#8a6a58"/><rect y="10" width="30" height="3" fill="#3c5a2c"/><polygon points="0,12 14,11 18,16 0,16" fill="#2b6cb0"/><rect x="18" y="13" width="12" height="3" fill="#4a5a2a"/></svg><div class="b" style="left:0.00px;top:23.10px;width:30.00px;height:40.00px;background:#fff;"></div><div class="b" style="left:2.50px;top:26.00px;width:9.00px;height:0.90px;background:#555;"></div><div class="b" style="left:4.00px;top:31.50px;width:10.00px;height:0.80px;background:#3d6b3f;"></div><div class="b" style="left:4.00px;top:34.00px;width:22.00px;height:8.00px;background:linear-gradient(90deg,#8a6a4a,#d8c8b0 40%,#a88a6a 60%,#6a5040);"></div></div><div class="b" style="left:137.90px;top:22.50px;width:11px;height:1.6px;background:#bfc2c6;border-radius:0 0 1px 1px"></div></div><div class="b" style="left:0.00px;top:86.60px;width:184.00px;height:0.90px;background:#f0f0f0;"></div><div class="a" style="left:8.30px;top:94.08px;font-size:6.4px;font-weight:400;color:#6a6a6a;transform-origin:0 0;transform:scaleX(0.8873);">Enables online submission of permits and the ability to track their</div><div class="a" style="left:8.30px;top:101.53px;font-size:6.4px;font-weight:400;color:#6a6a6a;transform-origin:0 0;transform:scaleX(0.8630);">approval status.</div><div class="b" style="left:8.1px;top:121.1px;height:10.9px;width:34.9px;background:#f0eef9;"></div><div class="a" style="left:10.10px;top:124.48px;font-size:6.4px;font-weight:400;color:#6660ae;transform-origin:0 0;transform:scaleX(0.8915);">Government</div></div><div class="b card" style="left:634.3px;top:370.9px;width:183.7px;height:138.5px"><div class="a" style="left:8.30px;top:6.44px;font-size:8.1px;font-weight:700;color:#242424;transform-origin:0 0;transform:scaleX(0.7874);">Starter layout 4</div><div class="b" style="left:7.6px;top:18.9px;width:168px;height:67.7px;background:#f5f4fd;overflow:hidden"><div class="b" style="left:8.2px;top:4.5px;width:137.9px;height:70px;overflow:hidden;box-shadow:0 0 1px rgba(0,0,0,.2)"><div class="b" style="left:0.00px;top:0.00px;width:137.90px;height:70.00px;background:#363a49;"></div><div class="b" style="left:7.2px;top:3.8px;width:3px;height:3px;border-radius:50%;background:#cfd2da"></div><div class="b" style="left:11.50px;top:4.60px;width:13.00px;height:1.10px;background:#a4a8b4;"></div><div class="b" style="left:82.00px;top:4.80px;width:4.50px;height:0.90px;background:#9ea2ae;"></div><div class="b" style="left:91.00px;top:4.80px;width:4.00px;height:0.90px;background:#9ea2ae;"></div><div class="b" style="left:100.00px;top:4.80px;width:6.50px;height:0.90px;background:#9ea2ae;"></div><div class="b" style="left:109.50px;top:4.80px;width:0.60px;height:0.90px;background:#9ea2ae;"></div><div class="b" style="left:111.50px;top:4.80px;width:2.00px;height:0.90px;background:#9ea2ae;"></div><div class="b" style="left:114.50px;top:4.80px;width:0.60px;height:0.90px;background:#9ea2ae;"></div><div class="b" style="left:120.00px;top:4.80px;width:7.00px;height:0.90px;background:#9ea2ae;"></div><div class="a" style="left:52.60px;top:16.51px;font-size:4.6px;font-weight:400;color:#eceef4;transform-origin:0 0;transform:scaleX(0.8385);">Introduction section</div><div class="b" style="left:21.3px;top:25.4px;width:95.8px;height:45px;overflow:hidden"><svg class="b" style="left:0;top:0;filter:blur(0.35px)" width="95.8" height="45" viewBox="0 0 96 40" preserveAspectRatio="none"><rect width="96" height="40" fill="#7aa2c0"/><polygon points="0,0 8,0 2,40 0,40" fill="#2c4a6a"/><polygon points="8,0 62,0 62,40 2,40" fill="#86acc8"/><polygon points="20,0 30,0 14,40 4,40" fill="#5a86aa"/><polygon points="38,0 46,0 34,40 26,40" fill="#a8c8dc"/><polygon points="23,0 26,0 8,40 5,40" fill="#1c3450"/><polygon points="47,0 50,0 33,40 30,40" fill="#1c3450"/><polygon points="56,0 58,0 52,40 50,40" fill="#2a4a68"/><polygon points="0,12 62,4 62,6 0,14" fill="#23405e" opacity=".8"/><polygon points="0,26 62,16 62,18 0,28" fill="#23405e" opacity=".8"/><polygon points="62,0 74,0 84,40 62,40" fill="#dfe6ea"/><polygon points="62,0 64,0 64,40 62,40" fill="#9aacb8"/><polygon points="66,3 68,3 69,9 67,9" fill="#1a1a1a"/><polygon points="67,15 69,15 70,21 68,21" fill="#1a1a1a"/><polygon points="68,27 70,27 71,33 69,33" fill="#1a1a1a"/><polygon points="73,9 75,9 76.5,15 74.5,15" fill="#1a1a1a"/><polygon points="75,21 77,21 78.5,27 76.5,27" fill="#1a1a1a"/><polygon points="74,0 96,0 96,40 84,40" fill="#d4e4ee"/><polygon points="80,8 94,3 96,5 96,40 83,40" fill="#4a7cb0"/><polygon points="80,8 94,3 95,5 81,10" fill="#8ab8dc"/><rect x="82" y="17" width="14" height="0.8" fill="#9ac0e0"/><rect x="82" y="25" width="14" height="0.8" fill="#9ac0e0"/><rect x="82" y="33" width="14" height="0.8" fill="#9ac0e0"/></svg></div></div><div class="b" style="left:128.30px;top:22.80px;width:30.5px;height:60px;border:1.5px solid #9a9a9a;border-radius:4px;background:#363a49;overflow:hidden;box-shadow:0 0 1.2px rgba(0,0,0,.4)"><div class="b" style="left:0.00px;top:0.00px;width:30.00px;height:60.00px;background:#363a49;"></div><div class="b" style="left:2.5px;top:2px;width:1.6px;height:1.6px;border-radius:50%;background:#cfd2da"></div><div class="b" style="left:5.00px;top:2.40px;width:8.00px;height:0.70px;background:#9ea2ae;"></div><div class="b" style="left:6.00px;top:7.50px;width:18.00px;height:0.80px;background:#c8cad2;"></div><div class="b" style="left:3.5px;top:10.5px;width:23px;height:9.5px;overflow:hidden"><svg class="b" style="left:0;top:0;filter:blur(0.35px)" width="23" height="9.5" viewBox="0 0 96 40" preserveAspectRatio="none"><rect width="96" height="40" fill="#7aa2c0"/><polygon points="0,0 8,0 2,40 0,40" fill="#2c4a6a"/><polygon points="8,0 62,0 62,40 2,40" fill="#86acc8"/><polygon points="20,0 30,0 14,40 4,40" fill="#5a86aa"/><polygon points="38,0 46,0 34,40 26,40" fill="#a8c8dc"/><polygon points="23,0 26,0 8,40 5,40" fill="#1c3450"/><polygon points="47,0 50,0 33,40 30,40" fill="#1c3450"/><polygon points="56,0 58,0 52,40 50,40" fill="#2a4a68"/><polygon points="0,12 62,4 62,6 0,14" fill="#23405e" opacity=".8"/><polygon points="0,26 62,16 62,18 0,28" fill="#23405e" opacity=".8"/><polygon points="62,0 74,0 84,40 62,40" fill="#dfe6ea"/><polygon points="62,0 64,0 64,40 62,40" fill="#9aacb8"/><polygon points="66,3 68,3 69,9 67,9" fill="#1a1a1a"/><polygon points="67,15 69,15 70,21 68,21" fill="#1a1a1a"/><polygon points="68,27 70,27 71,33 69,33" fill="#1a1a1a"/><polygon points="73,9 75,9 76.5,15 74.5,15" fill="#1a1a1a"/><polygon points="75,21 77,21 78.5,27 76.5,27" fill="#1a1a1a"/><polygon points="74,0 96,0 96,40 84,40" fill="#d4e4ee"/><polygon points="80,8 94,3 96,5 96,40 83,40" fill="#4a7cb0"/><polygon points="80,8 94,3 95,5 81,10" fill="#8ab8dc"/><rect x="82" y="17" width="14" height="0.8" fill="#9ac0e0"/><rect x="82" y="25" width="14" height="0.8" fill="#9ac0e0"/><rect x="82" y="33" width="14" height="0.8" fill="#9ac0e0"/></svg></div><div class="b" style="left:3.00px;top:22.50px;width:24.00px;height:0.60px;background:#a8acb8;"></div><div class="b" style="left:3.00px;top:24.40px;width:24.00px;height:0.60px;background:#a8acb8;"></div><div class="b" style="left:3.00px;top:26.30px;width:24.00px;height:0.60px;background:#a8acb8;"></div><div class="b" style="left:3.00px;top:28.20px;width:24.00px;height:0.60px;background:#a8acb8;"></div><div class="b" style="left:7.00px;top:31.00px;width:16.00px;height:2.40px;background:#1b8ad0;"></div><div class="b" style="left:6.00px;top:37.00px;width:18.00px;height:0.80px;background:#c8cad2;"></div><div class="b" style="left:3.00px;top:39.50px;width:24.00px;height:0.60px;background:#a8acb8;"></div><div class="b" style="left:3.00px;top:41.50px;width:24.00px;height:0.60px;background:#a8acb8;"></div></div><div class="b" style="left:137.80px;top:23.00px;width:11px;height:1.6px;background:#9a9a9a;border-radius:0 0 1px 1px"></div></div><div class="b" style="left:0.00px;top:86.60px;width:184.00px;height:0.90px;background:#f0f0f0;"></div><div class="a" style="left:8.30px;top:94.08px;font-size:6.4px;font-weight:400;color:#6a6a6a;transform-origin:0 0;transform:scaleX(0.8752);">Customize this generic template to solve a unique business need</div><div class="b" style="left:8.1px;top:121.1px;height:10.9px;width:39.8px;background:#f0eef9;"></div><div class="a" style="left:10.10px;top:124.48px;font-size:6.4px;font-weight:400;color:#6660ae;transform-origin:0 0;transform:scaleX(0.8798);">Cross-industry</div></div>
</div></body></html>
